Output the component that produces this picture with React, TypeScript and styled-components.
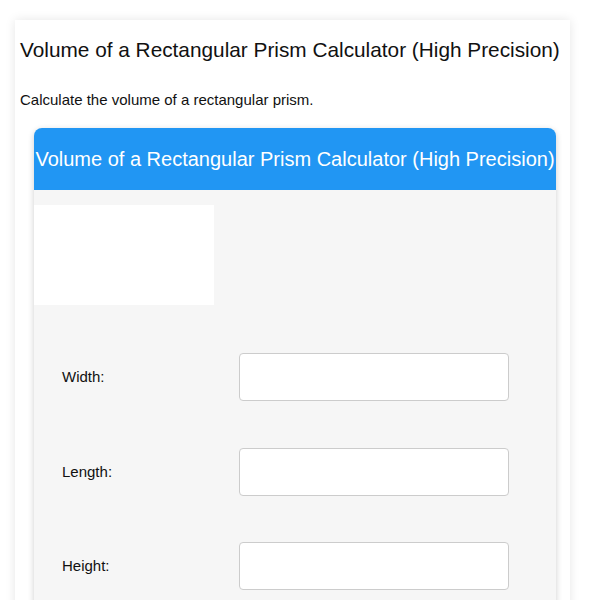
import React, { useState } from 'react';
import styled, { createGlobalStyle } from 'styled-components';

const GlobalStyle = createGlobalStyle`
  html, body {
    margin: 0;
    padding: 0;
    background: #ffffff;
    font-family: "Liberation Sans", Arial, sans-serif;
    color: #111;
  }
`;

const fields = [
  { id: 'width', label: 'Width:' },
  { id: 'length', label: 'Length:' },
  { id: 'height', label: 'Height:' },
];

export default function App() {
  const [values, setValues] = useState<Record<string, string>>({});

  const volume = fields.reduce((acc, f) => acc * (parseFloat(values[f.id]) || 0), 1);

  return (
    <>
      <GlobalStyle />
      <Page>
        <Title>Volume of a Rectangular Prism Calculator (High Precision)</Title>
        <Intro>Calculate the volume of a rectangular prism.</Intro>

        <Calculator>
          <CalcHeader>Volume of a Rectangular Prism Calculator (High Precision)</CalcHeader>
          <CalcBody>
            <AdSlot />
            <Form>
              {fields.map((f) => (
                <Row key={f.id}>
                  <Label htmlFor={f.id}>{f.label}</Label>
                  <Input
                    id={f.id}
                    type="number"
                    value={values[f.id] ?? ''}
                    onChange={(e) => setValues({ ...values, [f.id]: e.target.value })}
                  />
                </Row>
              ))}
              <Actions>
                <Button type="button">Calculate</Button>
              </Actions>
              <Result>Volume: {volume ? volume.toPrecision(15) : '—'}</Result>
            </Form>
          </CalcBody>
        </Calculator>

        <Notes>
          <NoteTitle>How it works</NoteTitle>
          <NoteText>
            The volume of a rectangular prism is the product of its width, length and height:
            V = w × l × h.
          </NoteText>
        </Notes>
      </Page>
    </>
  );
}

const Page = styled.div`
  margin: 20px 30px 20px 15px;
  padding: 0 5px 30px;
  background: #fff;
  box-shadow: 0 0 10px rgba(0, 0, 0, 0.1);
`;

const Title = styled.h1`
  margin: 0;
  padding-top: 18px;
  font-size: 20.8px;
  font-weight: normal;
  line-height: 24px;
`;

const Intro = styled.p`
  margin: 29px 0 0;
  font-size: 15px;
  line-height: 17px;
`;

const Calculator = styled.div`
  width: 522px;
  margin: 20px 0 0 14px;
  border-radius: 8px;
  overflow: hidden;
  background: #f6f6f6;
  box-shadow: 0 2px 6px rgba(0, 0, 0, 0.2);
`;

const CalcHeader = styled.div`
  background: #2196f3;
  color: #fff;
  text-align: center;
  font-size: 20px;
  line-height: 22px;
  padding: 20px 0;
  white-space: nowrap;
`;

const CalcBody = styled.div`
  padding: 15px 0 40px;
`;

const AdSlot = styled.div`
  width: 180px;
  height: 100px;
  background: #fff;
`;

const Form = styled.div`
  padding: 25px 47px 0 28px;
`;

const Row = styled.div`
  display: flex;
  align-items: center;
  padding: 23px 0 23.5px;
`;

const Label = styled.label`
  width: 177px;
  flex-shrink: 0;
  font-size: 15px;
  line-height: 16px;
`;

const Input = styled.input`
  box-sizing: border-box;
  width: 270px;
  height: 48px;
  border: 1px solid #ccc;
  border-radius: 4px;
  background: #fff;
  font-size: 15px;
  padding: 0 10px;
`;

const Actions = styled.div`
  display: flex;
  justify-content: center;
  padding: 30px 0;
`;

const Button = styled.button`
  background: #2196f3;
  color: #fff;
  border: none;
  border-radius: 4px;
  padding: 14px 40px;
  font-size: 16px;
  font-family: inherit;
`;

const Result = styled.div`
  margin-top: 20px;
  padding: 20px;
  background: #fff;
  border: 1px solid #ddd;
  border-radius: 4px;
  font-size: 16px;
  min-height: 200px;
`;

const Notes = styled.div`
  padding: 30px 0 0;
  min-height: 300px;
`;

const NoteTitle = styled.h2`
  font-size: 18px;
  font-weight: normal;
  margin: 0 0 10px;
`;

const NoteText = styled.p`
  font-size: 15px;
  margin: 0;
  line-height: 1.5;
`;
